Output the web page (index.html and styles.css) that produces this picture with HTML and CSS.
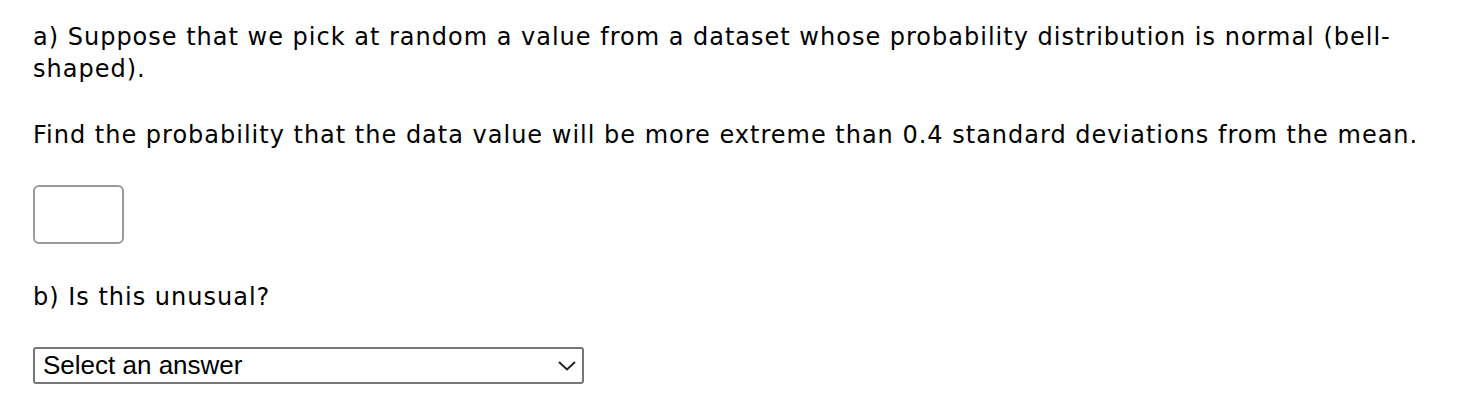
FILE: index.html
```html
<!DOCTYPE html>
<html>
<head>
<meta charset="utf-8">
<link rel="stylesheet" href="styles.css">
</head>
<body>
<div class="question">
  <p class="text">a) Suppose that we pick at random a value from a dataset whose probability distribution is normal (bell-shaped).</p>
  <p class="text">Find the probability that the data value will be more extreme than 0.4 standard deviations from the mean.</p>
  <div class="answer-box"></div>
  <p class="text">b) Is this unusual?</p>
  <div class="select">
    <span class="select-label">Select an answer</span>
    <svg class="chevron" width="18" height="10" viewBox="0 0 18 10"><path d="M1 1 L9 8.5 L17 1" fill="none" stroke="#222" stroke-width="2"/></svg>
  </div>
</div>
</body>
</html>
```

FILE: styles.css
```css
html, body {
  margin: 0;
  padding: 0;
  background: #ffffff;
}
.question {
  padding: 21px 0 0 33px;
  width: 1400px;
  font-family: "DejaVu Sans", sans-serif;
  color: #000;
}
.text {
  margin: 0 0 34px 0;
  font-size: 24px;
  line-height: 32px;
  letter-spacing: 1px;
}
.answer-box {
  width: 87px;
  height: 55px;
  border: 2px solid #9a9a9a;
  border-radius: 6px;
  margin: 3px 0 37px 0;
}
.select {
  width: 547px;
  height: 33px;
  border: 2px solid #767676;
  border-radius: 3px;
  margin-top: 1px;
  display: flex;
  align-items: center;
  justify-content: space-between;
}
.select-label {
  font-family: "Liberation Sans", Arial, sans-serif;
  font-size: 26px;
  padding-left: 8px;
  color: #000;
}
.chevron {
  margin-right: 6px;
}
```
